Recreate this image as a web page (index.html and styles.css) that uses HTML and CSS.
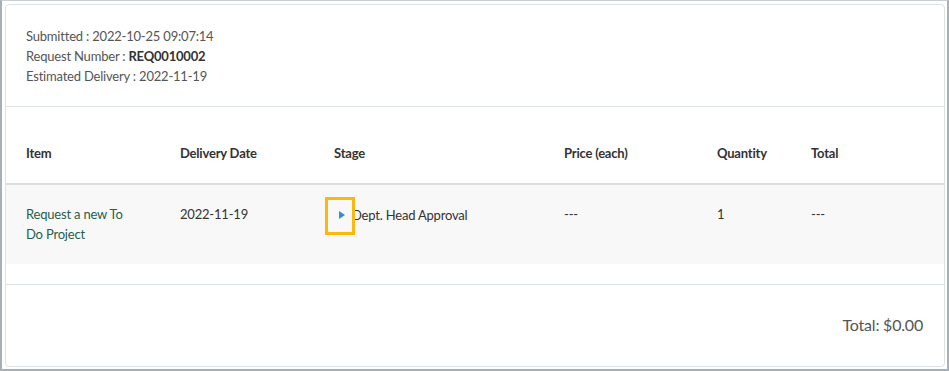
FILE: index.html
```html
<!DOCTYPE html>
<html lang="en">
    <head>
        <meta charset="UTF-8" />
        <meta name="viewport" content="width=device-width, initial-scale=1.0" />
        <title>Request REQ0010002</title>
        <link rel="stylesheet" href="styles.css">
    </head>
    <body>
        <div class="frame">
            <div class="card">
                <!--Request summary-->
                <section class="summary">
                    <div>Submitted : 2022-10-25 09:07:14</div>
                    <div>Request Number : <strong>REQ0010002</strong></div>
                    <div>Estimated Delivery : 2022-11-19</div>
                </section>

                <!--Items table-->
                <section class="items">
                    <table>
                        <thead>
                            <tr>
                                <th class="col-item">Item</th>
                                <th class="col-date">Delivery Date</th>
                                <th class="col-stage">Stage</th>
                                <th class="col-price">Price (each)</th>
                                <th class="col-qty">Quantity</th>
                                <th>Total</th>
                            </tr>
                        </thead>
                        <tbody>
                            <tr>
                                <td><a href="#" class="item-link">Request a new To Do Project</a></td>
                                <td>2022-11-19</td>
                                <td>
                                    <span class="stage">
                                        <button class="caret" aria-label="Expand stage">
                                            <svg width="6" height="8" viewBox="0 0 6 8"><path d="M0 0 L6 4 L0 8 Z" fill="#3a86e0"/></svg>
                                        </button>
                                        Dept. Head Approval
                                    </span>
                                </td>
                                <td>---</td>
                                <td>1</td>
                                <td>---</td>
                            </tr>
                        </tbody>
                    </table>
                </section>

                <!--Order total-->
                <section class="footer">Total: $0.00</section>
            </div>
        </div>
    </body>
</html>
```

FILE: styles.css
```css
:root {
    --border: #dde2e6;
    --text: #333;
    --muted: #555;
    --link: #1f5f4d;
    --row: #f8f8f8;
    --highlight: #fbb80f;
}
body {
    margin: 0;
    font-family: Lato, 'Open Sans', sans-serif;
    font-size: 13px;
    letter-spacing: -0.2px;
    color: var(--text);
}
.frame {
    box-sizing: border-box;
    width: 949px;
    height: 371px;
    border: 2px solid #a7afb7;
    border-top: 1px solid #c9ced3;
    padding: 3px 2px 2px 3px;
}
.card {
    border: 1px solid var(--border);
    border-radius: 4px;
    height: 361px;
}
.summary {
    padding: 21px 20px 20px;
    line-height: 20px;
    color: var(--muted);
    border-bottom: 1px solid var(--border);
}
.summary strong {
    color: #333;
}
.items {
    padding: 16px 0 20px;
    border-bottom: 1px solid var(--border);
}
table {
    width: 100%;
    border-collapse: collapse;
}
th {
    text-align: left;
    font-weight: 700;
    padding: 20px;
    line-height: 20px;
    border-bottom: 2px solid #dddddd;
}
td {
    padding: 19px 20px 20px;
    line-height: 20px;
    vertical-align: top;
    background-color: var(--row);
}
.col-item { width: 114px; }
.col-date { width: 114px; }
.col-stage { width: 190px; }
.col-price { width: 113px; }
.col-qty { width: 54px; }
.item-link {
    color: var(--link);
    text-decoration: none;
}
.stage {
    position: relative;
    display: inline-flex;
    align-items: center;
    gap: 7px;
}
.caret {
    border: 0;
    background: none;
    padding: 0 0 0 5px;
    height: 20px;
    display: flex;
    align-items: center;
}
/* focus highlight drawn over the caret */
.caret::after {
    content: "";
    position: absolute;
    box-sizing: border-box;
    left: -9px;
    top: -8px;
    width: 30px;
    height: 38px;
    border: 3px solid var(--highlight);
}
.footer {
    padding: 29px 21px;
    text-align: right;
    font-size: 16px;
    line-height: 22px;
    color: var(--muted);
}
```
